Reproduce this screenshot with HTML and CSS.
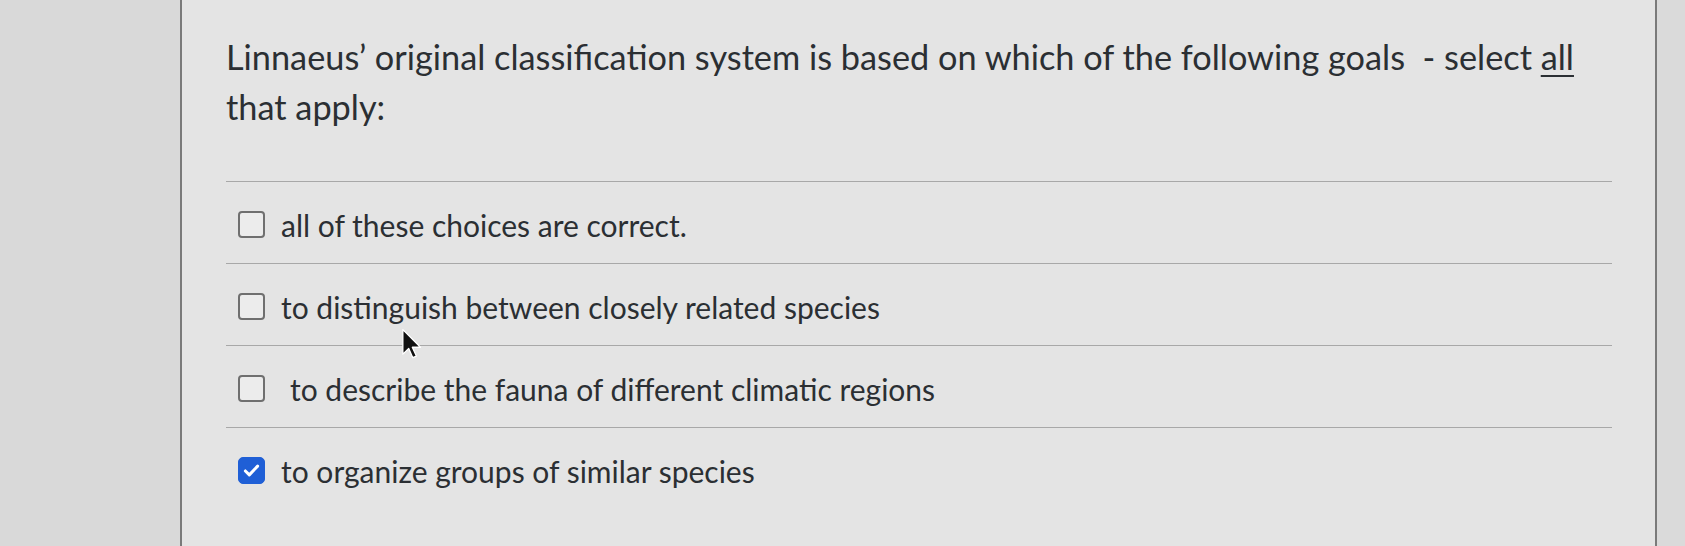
FILE: index.html
```html
<!DOCTYPE html>
<html lang="en">
<head>
    <meta charset="UTF-8">
    <title>Quiz Question</title>
    <link rel="stylesheet" href="styles.css">
</head>
<body>
    <div class="page">
        <!-- Left course nav gutter -->
        <div class="gutter"></div>

        <!-- Question card -->
        <div class="question">
            <p class="question-text">Linnaeus’ original classification system is based on which of the following goals &nbsp;- select <u>all</u> that apply:</p>

            <div class="answers">
                <label class="answer">
                    <span class="box"></span>
                    <span class="answer-text">all of these choices are correct.</span>
                </label>
                <label class="answer">
                    <span class="box"></span>
                    <span class="answer-text">to distinguish between closely related species</span>
                </label>
                <label class="answer">
                    <span class="box"></span>
                    <span class="answer-text shifted">to describe the fauna of different climatic regions</span>
                </label>
                <label class="answer">
                    <span class="box checked">
                        <svg viewBox="0 0 24 24" width="21" height="21">
                            <path d="M5 12.5l4.5 4.5L19 7" fill="none" stroke="#fff" stroke-width="3.4" stroke-linecap="round" stroke-linejoin="round"/>
                        </svg>
                    </span>
                    <span class="answer-text">to organize groups of similar species</span>
                </label>
            </div>

            <!-- mouse pointer -->
            <svg class="pointer" viewBox="0 0 12 19" width="20" height="31">
                <path d="M1 1v15l3.6-3.4 2.5 5.6 2.2-1-2.5-5.4h5z" fill="#111" stroke="#fff" stroke-width="0.8" stroke-linejoin="round"/>
            </svg>
        </div>

        <div class="gutter-right"></div>
    </div>
</body>
</html>
```

FILE: styles.css
```css
html, body {
    margin: 0;
    padding: 0;
    height: 100%;
}
body {
    background-color: #dcdcdc;
    font-family: Lato, "Open Sans", sans-serif;
    color: #2b2f33;
}
.page {
    display: flex;
    height: 546px;
    overflow: hidden;
}
.gutter {
    width: 180px;
    flex-shrink: 0;
    background-color: #d9d9d9;
}
.question {
    position: relative;
    width: 1386px;
    flex-shrink: 0;
    padding: 0 43px 0 44px;
    border-left: 2px solid #7a7a7a;
    border-right: 2px solid #7a7a7a;
    background-color: #e4e4e4;
}
.gutter-right {
    flex: 1;
    background-color: #dadada;
}
.question-text {
    margin: 32px 0 0 0;
    font-size: 34.3px;
    line-height: 50px;
}
.question-text u {
    text-underline-offset: 5px;
    text-decoration-thickness: 2px;
}
.answers {
    margin-top: 49px;
}
.answer {
    display: flex;
    align-items: center;
    height: 77px;
    padding: 4px 0 0 12px;
    border-top: 1px solid #a8a8a8;
}
.box {
    width: 23px;
    height: 23px;
    border: 2px solid #6f6f6f;
    border-radius: 4px;
    background-color: #ececec;
    flex-shrink: 0;
    display: flex;
    align-items: center;
    justify-content: center;
}
.box.checked {
    width: 25px;
    height: 25px;
    border: 1px solid #1f5fd6;
    border-radius: 5px;
    background-color: #1f5fd6;
}
.answer-text {
    margin-left: 16px;
    font-size: 30px;
}
.answer-text.shifted {
    margin-left: 25px;
}
.pointer {
    position: absolute;
    left: 219px;
    top: 328px;
}
```
